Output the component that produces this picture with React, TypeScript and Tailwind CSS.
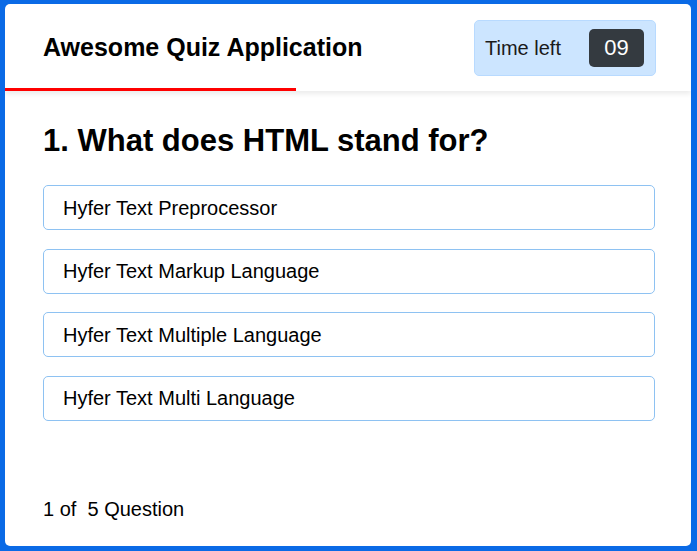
// Quiz card — header with timer, one question, answer options, footer counter.

const options = [
  "Hyfer Text Preprocessor",
  "Hyfer Text Markup Language",
  "Hyfer Text Multiple Language",
  "Hyfer Text Multi Language",
];

export default function App() {
  const timeLeft = "09";
  const progress = 0.424; // share of the header the red timer bar covers

  return (
    <div
      className="h-[551px] w-[697px] bg-[#0a6ae6] pl-[5px] pr-[6px] pt-[4px] pb-[5px]"
      style={{ fontFamily: '"Liberation Sans", Arial, sans-serif' }}
    >
      <div className="flex h-full flex-col overflow-hidden rounded-[5px] bg-white">
        <header className="relative flex h-[87px] shrink-0 items-center justify-between pl-[38px] pr-[35px] shadow-[0_3px_5px_0_rgba(0,0,0,0.08)]">
          <h1 className="text-[25px] font-bold text-black">
            Awesome Quiz Application
          </h1>
          <div className="flex h-[56px] w-[182px] items-center justify-between rounded-[5px] border border-[#b8daff] bg-[#cce5ff] pl-[10px] pr-[11px]">
            <span className="text-[20px] text-[#1a1a1a]">Time left</span>
            <span className="flex h-[38px] w-[55px] items-center justify-center rounded-[5px] bg-[#343a40] text-[22px] text-white">
              {timeLeft}
            </span>
          </div>
          <div
            className="absolute bottom-0 left-0 h-[3px] bg-[#ff0000]"
            style={{ width: `${progress * 100}%` }}
          />
        </header>

        <main className="flex flex-1 flex-col pl-[38px] pr-[36px] pt-[33px]">
          <h2 className="text-[31px] font-bold leading-[34px] text-black">
            1. What does HTML stand for?
          </h2>
          <div className="mt-[27px] flex flex-col gap-[18.6px]">
            {options.map((o) => (
              <div
                key={o}
                className="flex h-[45px] items-center rounded-[5px] border border-[#8ec2f2] px-[19px] text-[20px] text-black"
              >
                {o}
              </div>
            ))}
          </div>
        </main>

        <footer className="flex h-[67px] shrink-0 items-start px-[38px] pt-[15px] text-[20px] text-black whitespace-pre">
          {"1 of  5 Question"}
        </footer>
      </div>
    </div>
  );
}
